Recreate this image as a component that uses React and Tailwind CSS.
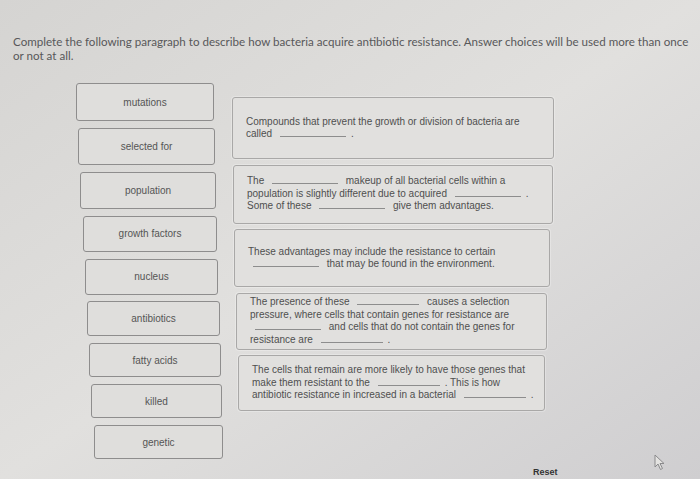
import React from 'react';

const chips = [
  { label: 'mutations', cls: 'ml-[76px] w-[138px] h-[38px]' },
  { label: 'selected for', cls: 'ml-[78px] w-[137px] h-[37px]' },
  { label: 'population', cls: 'ml-[80px] w-[136px] h-[37px]' },
  { label: 'growth factors', cls: 'ml-[83px] w-[134px] h-[36px]' },
  { label: 'nucleus', cls: 'ml-[85px] w-[133px] h-[36px]' },
  { label: 'antibiotics', cls: 'ml-[87px] w-[133px] h-[35px]' },
  { label: 'fatty acids', cls: 'ml-[89px] w-[132px] h-[34px]' },
  { label: 'killed', cls: 'ml-[91px] w-[131px] h-[34px]' },
  { label: 'genetic', cls: 'ml-[94px] w-[129px] h-[34px]' },
];

const Blank = ({ w = 'w-[66px]' }) => (
  <span className={`inline-block ${w} h-[9px] border-b border-[#8d8d8d] mx-[5px] align-baseline`} />
);

const Box = ({ cls, children }) => (
  <div className={`${cls} flex items-center rounded-[3px] border border-[#a9a8a7] bg-[#e1e0de] shadow-[0_0_0_1px_rgba(255,255,255,0.25)]`}>
    <p className="whitespace-nowrap text-[10px] leading-[12.5px] text-[#4f4f4f]">{children}</p>
  </div>
);

export default function App() {
  return (
    <div
      className="relative w-[700px] h-[479px] overflow-hidden bg-gradient-to-br from-[#d5d4d2] via-[#e1e0de] to-[#cfced0]"
      style={{ fontFamily: 'Lato, "Open Sans", sans-serif' }}
    >
      <p className="pt-[35px] pl-[13px] pr-[2px] text-[11.6px] leading-[13.5px] text-[#58585a] whitespace-nowrap">
        Complete the following paragraph to describe how bacteria acquire antibiotic resistance. Answer choices will be used more than once
        <br />
        or not at all.
      </p>

      <div className="-mt-[1px] flex items-start" style={{ fontFamily: '"Liberation Sans", Arial, sans-serif' }}>
        <div className="mt-[22px] flex flex-col gap-[6.9px]">
          {chips.map((c) => (
            <div
              key={c.label}
              className={`${c.cls} flex items-center justify-center rounded-[3px] border border-[#8e8d8d] bg-[#dfdedc] text-[10px] text-[#555555]`}
            >
              {c.label}
            </div>
          ))}
        </div>

        <div className="mt-[36px] flex flex-col gap-[5.5px]">
          <Box cls="ml-[9px] w-[322px] h-[62px] pl-[13px]">
            Compounds that prevent the growth or division of bacteria are
            <br />
            called <Blank />.
          </Box>
          <Box cls="ml-[10px] w-[320px] h-[59px] pl-[13px]">
            The <Blank /> makeup of all bacterial cells within a
            <br />
            population is slightly different due to acquired <Blank />.
            <br />
            Some of these <Blank /> give them advantages.
          </Box>
          <Box cls="ml-[11px] w-[316px] h-[58px] pl-[13px]">
            These advantages may include the resistance to certain
            <br />
            <Blank /> that may be found in the environment.
          </Box>
          <Box cls="ml-[13px] w-[311px] h-[57px] pl-[13px]">
            The presence of these <Blank w="w-[62px]" /> causes a selection
            <br />
            pressure, where cells that contain genes for resistance are
            <br />
            <Blank /> and cells that do not contain the genes for
            <br />
            resistance are <Blank w="w-[62px]" />.
          </Box>
          <Box cls="ml-[15px] w-[307px] h-[56px] pl-[13px]">
            The cells that remain are more likely to have those genes that
            <br />
            make them resistant to the <Blank w="w-[62px]" />. This is how
            <br />
            antibiotic resistance in increased in a bacterial <Blank w="w-[62px]" />.
          </Box>
        </div>
      </div>

      <div
        className="absolute left-[533px] top-[466px] text-[9px] font-bold text-[#333333]"
        style={{ fontFamily: '"Liberation Sans", Arial, sans-serif' }}
      >
        Reset
      </div>

      <svg className="absolute left-[654px] top-[454px]" width="12" height="17" viewBox="0 0 12 17">
        <path d="M1 1 L1 13 L4 10 L6.5 15.5 L8.5 14.5 L6 9.5 L10 9.5 Z" fill="#e4e3e1" stroke="#8a8a8c" strokeWidth="1" strokeLinejoin="round" />
      </svg>
    </div>
  );
}
